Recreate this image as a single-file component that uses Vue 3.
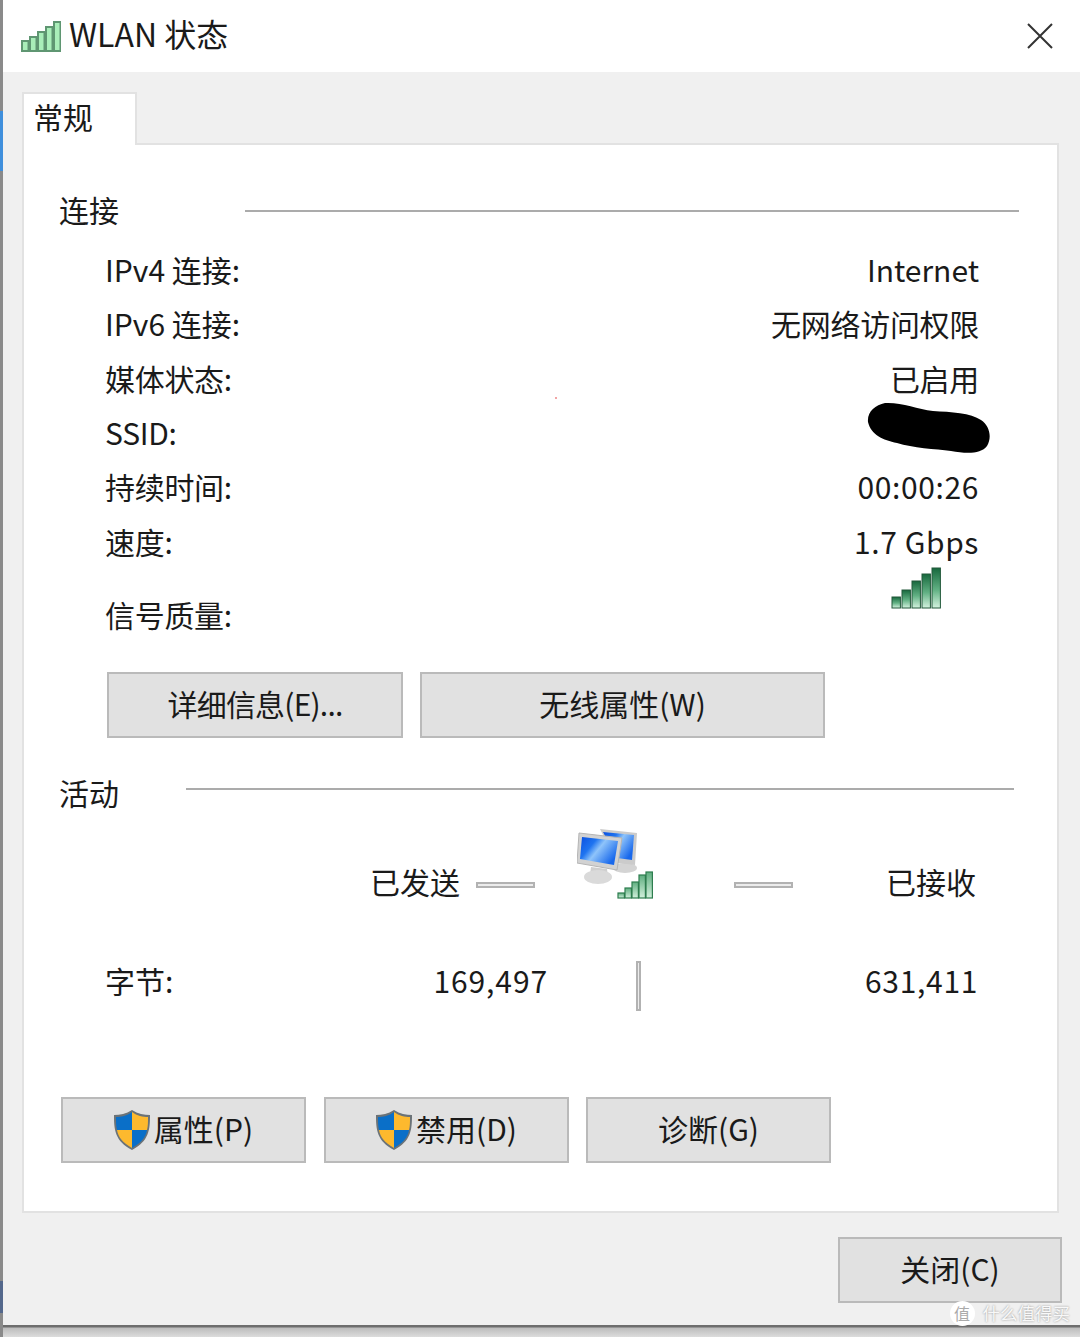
<script setup>
const rows = [
  { label: 'IPv4 连接:', value: 'Internet', cls: 'latin', labelCls: 'latin' },
  { label: 'IPv6 连接:', value: '无网络访问权限', labelCls: 'latin' },
  { label: '媒体状态:', value: '已启用' },
  { label: 'SSID:', value: '', hidden: true },
  { label: '持续时间:', value: '00:00:26', cls: 'num' },
  { label: '速度:', value: '1.7 Gbps', cls: 'num' },
]
const titleBars = [
  { x: 1, h: 10 }, { x: 9, h: 14 }, { x: 17, h: 19 }, { x: 25, h: 24 }, { x: 33, h: 29 },
]
const qualityBars = [
  { x: 1, h: 11 }, { x: 11, h: 18 }, { x: 21, h: 27 }, { x: 31, h: 34 }, { x: 41, h: 40 },
]
const miniBars = [
  { x: 41, y: 66, h: 5 }, { x: 48, y: 61, h: 10 }, { x: 55, y: 55, h: 16 }, { x: 62, y: 48, h: 23 }, { x: 69, y: 45, h: 26 },
]
</script>

<template>
  <div class="window">
    <header class="titlebar">
      <svg class="title-icon" viewBox="0 0 40 31" width="40" height="31">
        <rect v-for="b in titleBars" :key="b.x" :x="b.x" :y="30 - b.h" width="6.5" :height="b.h" fill="#a9eeb9" stroke="#5f9672" stroke-width="2" />
      </svg>
      <span class="title-text">WLAN 状态</span>
      <svg class="close-icon" viewBox="0 0 26 26" width="26" height="26">
        <path d="M1 1 L25 25 M25 1 L1 25" stroke="#333" stroke-width="2" fill="none" />
      </svg>
    </header>

    <main class="content">
      <span class="speck"></span>
      <div class="tab">常规</div>
      <section class="panel">
        <div class="group-head conn-head">
          <span class="group-title">连接</span>
          <span class="rule"></span>
        </div>
        <div class="rows">
          <div v-for="r in rows" :key="r.label" class="row">
            <span :class="r.labelCls">{{ r.label }}</span>
            <span class="value" :class="[r.cls, { scribble: r.hidden }]">
              {{ r.value }}
              <svg v-if="r.hidden" class="blot" viewBox="0 0 124 52" width="124" height="52">
                <path d="M18 1 C34 0 50 7 66 9 C84 10 104 11 114 18 C123 24 125 36 120 44 C114 52 100 52 84 49 C68 47 46 46 30 41 C16 38 4 33 1 20 C0 10 8 3 18 1 Z" fill="#000" />
              </svg>
            </span>
          </div>
          <div class="row signal-row">
            <span class="signal-label">信号质量:</span>
            <svg class="signal" viewBox="0 0 50 42" width="50" height="42">
              <defs>
                <linearGradient id="sig" x1="0" y1="0" x2="0" y2="1">
                  <stop offset="0" stop-color="#17683d" />
                  <stop offset="0.55" stop-color="#62b184" />
                  <stop offset="1" stop-color="#d4f2df" />
                </linearGradient>
              </defs>
              <rect v-for="b in qualityBars" :key="b.x" :x="b.x" :y="41 - b.h" width="8.4" :height="b.h" fill="url(#sig)" stroke="#22583a" stroke-width="1" />
            </svg>
          </div>
        </div>
        <div class="detail-buttons">
          <button class="btn w296 tight">详细信息(E)...</button>
          <button class="btn w405">无线属性(W)</button>
        </div>

        <div class="group-head act-head">
          <span class="group-title">活动</span>
          <span class="rule"></span>
        </div>
        <div class="activity">
          <span class="sent">已发送</span>
          <span class="dash"></span>
          <svg class="network" viewBox="0 0 76 74" width="76" height="74">
            <defs>
              <linearGradient id="scr" x1="0" y1="0" x2="1" y2="0.6">
                <stop offset="0" stop-color="#0a4fe0" />
                <stop offset="0.35" stop-color="#1f74f0" />
                <stop offset="0.55" stop-color="#8fc4fa" />
                <stop offset="1" stop-color="#1868ec" />
              </linearGradient>
              <linearGradient id="sig2" x1="0" y1="0" x2="0" y2="1">
                <stop offset="0" stop-color="#5fae80" />
                <stop offset="1" stop-color="#d2f0dc" />
              </linearGradient>
            </defs>
            <ellipse cx="48" cy="41" rx="12" ry="5" fill="#d4d4d4" />
            <path d="M23 2 L60 6 L58 38 L40 36 Z" fill="#cbcbcb" />
            <path d="M26 5 L57 8 L55 33 L40 31 Z" fill="url(#scr)" />
            <path d="M14 40 L30 42 L31 50 L13 48 Z" fill="#cfcfcf" />
            <ellipse cx="21" cy="50" rx="14" ry="7" fill="#dadada" />
            <path d="M2 6 L45 11 L40 43 L0 36 Z" fill="#d2d2d2" stroke="#b5b5b5" />
            <path d="M5 10 L41 14 L37 38 L3 32 Z" fill="url(#scr)" />
            <rect v-for="b in miniBars" :key="b.x" :x="b.x" :y="b.y" width="6.4" :height="b.h" fill="url(#sig2)" stroke="#2e7d4f" stroke-width="1.2" />
          </svg>
          <span class="dash"></span>
          <span class="received">已接收</span>
        </div>
        <div class="bytes">
          <span class="bytes-label">字节:</span>
          <span class="bytes-sent">169,497</span>
          <span class="divider"></span>
          <span class="bytes-recv">631,411</span>
        </div>
        <div class="action-buttons">
          <button class="btn w245">
            <svg class="shield" viewBox="0 0 36 40" width="36" height="40">
              <path d="M18 0 C24 4 30 5 36 5 C36 20 35 31 18 40 C1 31 0 20 0 5 C6 5 12 4 18 0 Z" fill="#6b7378" />
              <path d="M18 2 C13 6 7 7 2 7 C2 12 2 16 3 20 L18 20 Z" fill="#0a6fc8" />
              <path d="M18 2 C23 6 29 7 34 7 C34 12 34 16 33 20 L18 20 Z" fill="#fdb92e" />
              <path d="M3 20 L18 20 L18 38 C9 33 4 27 3 20 Z" fill="#fdb92e" />
              <path d="M33 20 L18 20 L18 38 C27 33 32 27 33 20 Z" fill="#0a6fc8" />
            </svg>属性(P)
          </button>
          <button class="btn w245">
            <svg class="shield" viewBox="0 0 36 40" width="36" height="40">
              <path d="M18 0 C24 4 30 5 36 5 C36 20 35 31 18 40 C1 31 0 20 0 5 C6 5 12 4 18 0 Z" fill="#6b7378" />
              <path d="M18 2 C13 6 7 7 2 7 C2 12 2 16 3 20 L18 20 Z" fill="#0a6fc8" />
              <path d="M18 2 C23 6 29 7 34 7 C34 12 34 16 33 20 L18 20 Z" fill="#fdb92e" />
              <path d="M3 20 L18 20 L18 38 C9 33 4 27 3 20 Z" fill="#fdb92e" />
              <path d="M33 20 L18 20 L18 38 C27 33 32 27 33 20 Z" fill="#0a6fc8" />
            </svg>禁用(D)
          </button>
          <button class="btn w245">诊断(G)</button>
        </div>
      </section>
      <div class="footer">
        <button class="btn close-btn">关闭(C)</button>
      </div>
      <div class="watermark"><span class="wm-badge">值</span>什么值得买</div>
    </main>
    <div class="outside"></div>
  </div>
</template>

<style scoped>
.window {
  width: 1080px;
  height: 1337px;
  box-sizing: border-box;
  display: flex;
  flex-direction: column;
  position: relative;
  overflow: hidden;
  border-style: solid;
  border-width: 0 0 0 3px;
  border-image: linear-gradient(to bottom, #8a8a8a 0 112px, #3f8fdc 112px 172px, #8a8a8a 172px 1280px, #54688c 1280px 1312px, #8a8a8a 1312px) 1;
  font-family: "Noto Sans CJK SC", "Open Sans", sans-serif;
  font-size: 30px;
  color: #1a1a1a;
  background: #fff;
}
.titlebar {
  height: 72px;
  flex: none;
  display: flex;
  align-items: center;
  padding: 0 27px 0 18px;
  background: #fff;
}
.title-icon { flex: none; margin: 0 9px 0 0; }
.title-text { flex: 1; font-size: 32px; line-height: 44px; margin-bottom: 6px; margin-left: -1px; }
.content {
  flex: 1;
  position: relative;
  display: flex;
  flex-direction: column;
  padding: 20px 21px 0 19px;
  background: #f0f0f0;
}
.speck {
  position: absolute;
  left: 552px;
  top: 325px;
  width: 2px;
  height: 2px;
  background: #f2a5a5;
  z-index: 2;
}
.tab {
  width: 115px;
  height: 53px;
  box-sizing: border-box;
  padding-left: 9px;
  line-height: 44px;
  background: #fff;
  border: 2px solid #e2e2e2;
  border-bottom: 0;
  margin-bottom: -2px;
  position: relative;
  z-index: 1;
}
.panel {
  height: 1070px;
  box-sizing: border-box;
  background: #fff;
  border: 2px solid #e2e2e2;
  padding: 0 0 0 35px;
  display: flex;
  flex-direction: column;
}
.group-head {
  display: flex;
  align-items: center;
  line-height: 44px;
}
.conn-head { margin-top: 42px; padding-right: 38px; }
.conn-head .group-title { width: 186px; }
.conn-head .rule { margin-top: 4px; }
.act-head { margin-top: 32px; padding-right: 43px; }
.act-head .group-title { width: 127px; }
.act-head .rule { margin-bottom: 6px; }
.rule { flex: 1; height: 2px; background: #ababab; }
.rows {
  margin-top: 11px;
  padding: 0 78px 0 46px;
  display: flex;
  flex-direction: column;
}
.row {
  height: 54.3px;
  display: flex;
  justify-content: space-between;
  align-items: center;
  letter-spacing: -0.3px;
}
.value { position: relative; }
.latin { letter-spacing: 0; }
.num { letter-spacing: 0.6px; }
.scribble { width: 0; height: 54px; }
.blot { position: absolute; right: -12px; top: -3px; }
.signal-row { height: 74px; align-items: flex-start; }
.signal-label { margin-top: 24px; margin-bottom: 2px; line-height: 44px; }
.signal { margin: -1px 38px 0 0; }
.detail-buttons {
  display: flex;
  gap: 17px;
  margin: 30px 0 0 48px;
}
.btn {
  height: 66px;
  box-sizing: border-box;
  font: inherit;
  color: inherit;
  background: #e1e1e1;
  border: 2px solid #bababa;
  padding: 0 0 4px;
  display: flex;
  align-items: center;
  justify-content: center;
}
.w296 { width: 296px; }
.w405 { width: 405px; }
.w245 { width: 245px; }
.tight { letter-spacing: -0.8px; }
.shield { flex: none; margin: 4px 4px 0 0; }
.activity {
  display: flex;
  align-items: flex-start;
  margin-top: 13px;
  padding-left: 311px;
  height: 76px;
}
.sent, .received { line-height: 44px; margin-top: 32px; }
.dash {
  width: 59px;
  height: 6px;
  box-sizing: border-box;
  border: 2px solid #b2b2b2;
  background: #ececec;
  margin-top: 55px;
}
.sent + .dash { margin-left: 16px; margin-right: 42px; }
.network + .dash { margin-left: 81px; margin-right: 93px; }
.network { flex: none; }
.bytes {
  display: flex;
  align-items: flex-start;
  height: 50px;
  margin-top: 55px;
  padding-left: 46px;
}
.bytes span { line-height: 44px; }
.bytes-label { width: 326px; }
.bytes-sent { width: 117px; text-align: right; letter-spacing: 0.9px; white-space: nowrap; }
.divider { width: 5px; height: 50px; box-sizing: border-box; border: 2px solid #b2b2b2; background: #ececec; margin: 3px 0 0 88px; }
.bytes-recv { margin-left: 224px; letter-spacing: 0.7px; }
.action-buttons {
  display: flex;
  gap: 18px;
  margin: 89px 0 0 2px;
}
.action-buttons .btn:last-child { margin-left: -1px; }
.footer {
  display: flex;
  justify-content: flex-end;
  margin: 24px -3px 0 0;
}
.close-btn { width: 224px; height: 66px; }
.watermark {
  position: absolute;
  right: 10px;
  bottom: -1px;
  display: flex;
  align-items: center;
  gap: 8px;
  font-size: 17.5px;
  line-height: 26px;
  color: #f8f8f8;
  text-shadow: 0 0 2px #888;
}
.wm-badge {
  width: 25px;
  height: 25px;
  border-radius: 50%;
  background: #fff;
  color: #aaa;
  font-size: 16px;
  line-height: 25px;
  text-align: center;
  text-shadow: none;
}
.outside {
  flex: none;
  height: 12px;
  background: linear-gradient(#6e6e6e 0 2px, #bdbdbd 3px, #dcdcdc);
}
</style>
